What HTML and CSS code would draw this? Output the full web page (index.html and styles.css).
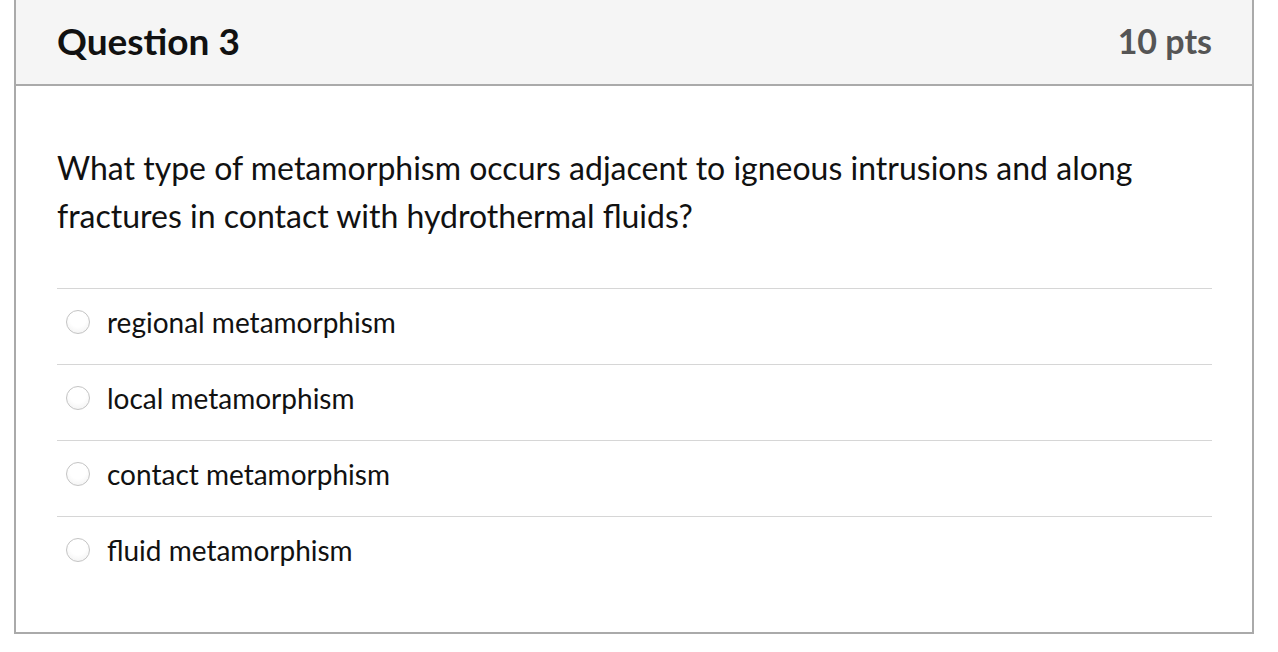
FILE: index.html
```html
<!DOCTYPE html>
<html>
<head>
<meta charset="utf-8">
<link rel="stylesheet" href="styles.css">
</head>
<body>
<div class="question">
  <div class="question-header">
    <h2 class="question-title">Question 3</h2>
    <span class="question-points">10 pts</span>
  </div>
  <div class="question-body">
    <p class="question-text">What type of metamorphism occurs adjacent to igneous intrusions and along fractures in contact with hydrothermal fluids?</p>
    <div class="answers">
      <label class="answer"><span class="radio"></span><span class="answer-text">regional metamorphism</span></label>
      <label class="answer"><span class="radio"></span><span class="answer-text">local metamorphism</span></label>
      <label class="answer"><span class="radio"></span><span class="answer-text">contact metamorphism</span></label>
      <label class="answer"><span class="radio"></span><span class="answer-text">fluid metamorphism</span></label>
    </div>
  </div>
</div>
</body>
</html>
```

FILE: styles.css
```css
html, body {
  margin: 0;
  padding: 0;
  background: #fff;
}
body {
  font-family: Lato, "Open Sans", sans-serif;
  color: #111;
}
.question {
  margin-left: 14px;
  width: 1236px;
  border: 2px solid #aaaaaa;
  border-top: none;
}
.question-header {
  height: 86px;
  box-sizing: border-box;
  background: #f5f5f5;
  border-bottom: 2px solid #aaaaaa;
  display: flex;
  align-items: center;
  justify-content: space-between;
  padding: 0 40px 4px 41px;
}
.question-title {
  margin: 0;
  font-size: 37px;
  font-weight: 700;
  color: #111;
}
.question-points {
  font-size: 34px;
  font-weight: 700;
  color: #555;
}
.question-body {
  padding: 58px 40px 40px 41px;
}
.question-text {
  margin: 0 0 48px;
  font-size: 32px;
  line-height: 48px;
  color: #111;
}
.answers {
  display: flex;
  flex-direction: column;
}
.answer {
  display: flex;
  align-items: center;
  height: 76px;
  box-sizing: border-box;
  border-top: 1px solid #d6d6d6;
  padding: 0 0 9px 9px;
}
.radio {
  width: 24px;
  height: 24px;
  box-sizing: border-box;
  border-radius: 50%;
  border: 1px solid #c4c4c4;
  background: radial-gradient(circle at 50% 35%, #ffffff 45%, #eeeeee 100%);
  flex: none;
  margin-right: 17px;
}
.answer-text {
  font-size: 28px;
  color: #111;
}
```
